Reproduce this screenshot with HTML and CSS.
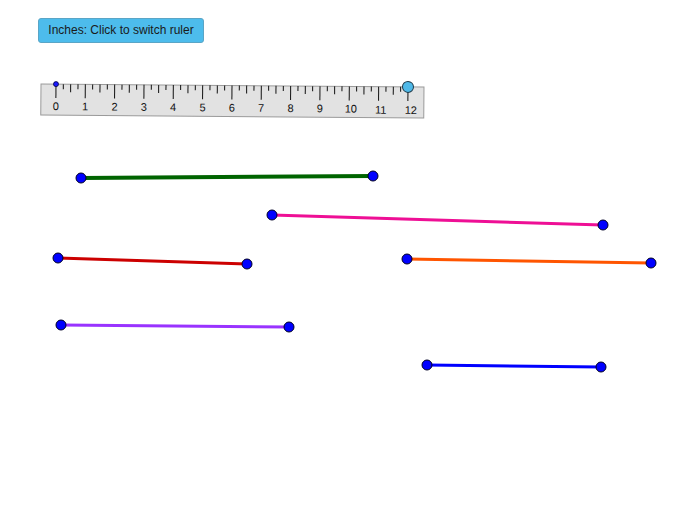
FILE: index.html
```html
<!DOCTYPE html>
<html>
<head>
<meta charset="utf-8">
<link rel="stylesheet" href="styles.css">
</head>
<body>
<div class="applet">
  <svg class="canvas" width="699" height="517" viewBox="0 0 699 517" xmlns="http://www.w3.org/2000/svg">
    <g transform="rotate(0.45 41 84)">
      <rect class="ruler" x="41" y="84" width="383" height="31"/>
      <g class="ticks">
        <line x1="56" y1="84" x2="56" y2="98"/>
        <line x1="63.33" y1="84" x2="63.33" y2="89"/>
        <line x1="70.67" y1="84" x2="70.67" y2="92"/>
        <line x1="78" y1="84" x2="78" y2="89"/>
        <line x1="85.33" y1="84" x2="85.33" y2="98"/>
        <line x1="92.67" y1="84" x2="92.67" y2="89"/>
        <line x1="100" y1="84" x2="100" y2="92"/>
        <line x1="107.33" y1="84" x2="107.33" y2="89"/>
        <line x1="114.67" y1="84" x2="114.67" y2="98"/>
        <line x1="122" y1="84" x2="122" y2="89"/>
        <line x1="129.33" y1="84" x2="129.33" y2="92"/>
        <line x1="136.67" y1="84" x2="136.67" y2="89"/>
        <line x1="144" y1="84" x2="144" y2="98"/>
        <line x1="151.33" y1="84" x2="151.33" y2="89"/>
        <line x1="158.67" y1="84" x2="158.67" y2="92"/>
        <line x1="166" y1="84" x2="166" y2="89"/>
        <line x1="173.33" y1="84" x2="173.33" y2="98"/>
        <line x1="180.67" y1="84" x2="180.67" y2="89"/>
        <line x1="188" y1="84" x2="188" y2="92"/>
        <line x1="195.33" y1="84" x2="195.33" y2="89"/>
        <line x1="202.67" y1="84" x2="202.67" y2="98"/>
        <line x1="210" y1="84" x2="210" y2="89"/>
        <line x1="217.33" y1="84" x2="217.33" y2="92"/>
        <line x1="224.67" y1="84" x2="224.67" y2="89"/>
        <line x1="232" y1="84" x2="232" y2="98"/>
        <line x1="239.33" y1="84" x2="239.33" y2="89"/>
        <line x1="246.67" y1="84" x2="246.67" y2="92"/>
        <line x1="254" y1="84" x2="254" y2="89"/>
        <line x1="261.33" y1="84" x2="261.33" y2="98"/>
        <line x1="268.67" y1="84" x2="268.67" y2="89"/>
        <line x1="276" y1="84" x2="276" y2="92"/>
        <line x1="283.33" y1="84" x2="283.33" y2="89"/>
        <line x1="290.67" y1="84" x2="290.67" y2="98"/>
        <line x1="298" y1="84" x2="298" y2="89"/>
        <line x1="305.33" y1="84" x2="305.33" y2="92"/>
        <line x1="312.67" y1="84" x2="312.67" y2="89"/>
        <line x1="320" y1="84" x2="320" y2="98"/>
        <line x1="327.33" y1="84" x2="327.33" y2="89"/>
        <line x1="334.67" y1="84" x2="334.67" y2="92"/>
        <line x1="342" y1="84" x2="342" y2="89"/>
        <line x1="349.33" y1="84" x2="349.33" y2="98"/>
        <line x1="356.67" y1="84" x2="356.67" y2="89"/>
        <line x1="364" y1="84" x2="364" y2="92"/>
        <line x1="371.33" y1="84" x2="371.33" y2="89"/>
        <line x1="378.67" y1="84" x2="378.67" y2="98"/>
        <line x1="386" y1="84" x2="386" y2="89"/>
        <line x1="393.33" y1="84" x2="393.33" y2="92"/>
        <line x1="400.67" y1="84" x2="400.67" y2="89"/>
        <line x1="408" y1="84" x2="408" y2="98"/>
      </g>
      <g class="labels">
        <text x="56" y="110">0</text>
        <text x="85.3" y="110">1</text>
        <text x="114.7" y="110">2</text>
        <text x="144" y="110">3</text>
        <text x="173.3" y="110">4</text>
        <text x="202.7" y="110">5</text>
        <text x="232" y="110">6</text>
        <text x="261.3" y="110">7</text>
        <text x="290.7" y="110">8</text>
        <text x="320" y="110">9</text>
        <text x="351" y="110">10</text>
        <text x="381" y="111">11</text>
        <text x="411" y="111">12</text>
      </g>
      <circle class="pt-small" cx="56" cy="84" r="2.5"/>
      <circle class="pt-handle" cx="408" cy="84" r="5.5"/>
    </g>

    <line class="seg" x1="81" y1="178" x2="373" y2="176" stroke="#006400" stroke-width="4"/>
    <line class="seg" x1="272" y1="215" x2="603" y2="225" stroke="#ee0f95" stroke-width="3"/>
    <line class="seg" x1="58" y1="258" x2="247" y2="264" stroke="#cc0000" stroke-width="3"/>
    <line class="seg" x1="407" y1="259" x2="651" y2="263" stroke="#ff5500" stroke-width="3"/>
    <line class="seg" x1="61" y1="325" x2="289" y2="327" stroke="#9933ff" stroke-width="3"/>
    <line class="seg" x1="427" y1="365" x2="601" y2="367" stroke="#0000ff" stroke-width="3"/>

    <g class="pts">
      <circle cx="81" cy="178" r="5"/>
      <circle cx="373" cy="176" r="5"/>
      <circle cx="272" cy="215" r="5"/>
      <circle cx="603" cy="225" r="5"/>
      <circle cx="58" cy="258" r="5"/>
      <circle cx="247" cy="264" r="5"/>
      <circle cx="407" cy="259" r="5"/>
      <circle cx="651" cy="263" r="5"/>
      <circle cx="61" cy="325" r="5"/>
      <circle cx="289" cy="327" r="5"/>
      <circle cx="427" cy="365" r="5"/>
      <circle cx="601" cy="367" r="5"/>
    </g>
  </svg>
  <button class="switch-btn">Inches: Click to switch ruler</button>
</div>
</body>
</html>
```

FILE: styles.css
```css
html, body {
  margin: 0;
  padding: 0;
  background: #ffffff;
}

.applet {
  position: relative;
  width: 699px;
  height: 517px;
  overflow: hidden;
  background: #ffffff;
}

.canvas {
  display: block;
}

.ruler {
  fill: #e2e2e2;
  stroke: #9a9a9a;
  stroke-width: 1;
}

.ticks line {
  stroke: #111111;
  stroke-width: 1;
}

.labels text {
  font-family: "Liberation Sans", Arial, sans-serif;
  font-size: 11px;
  fill: #111111;
  text-anchor: middle;
}

.pt-small {
  fill: #1a1aff;
  stroke: #000044;
  stroke-width: 0.8;
}

.pt-handle {
  fill: #4fb9e8;
  stroke: #1e3a4a;
  stroke-width: 1;
}

.seg {
  stroke-linecap: butt;
}

.pts circle {
  fill: #0000ff;
  stroke: #000022;
  stroke-width: 1;
}

.switch-btn {
  position: absolute;
  left: 38px;
  top: 18px;
  width: 166px;
  height: 25px;
  margin: 0;
  padding: 0 0 1px 0;
  box-sizing: border-box;
  background: #4dbcec;
  border: 1px solid #5aa5c6;
  border-radius: 3px;
  font-family: "Liberation Sans", Arial, sans-serif;
  font-size: 12px;
  color: #1a1a1a;
  text-align: center;
  line-height: 22px;
}
```
